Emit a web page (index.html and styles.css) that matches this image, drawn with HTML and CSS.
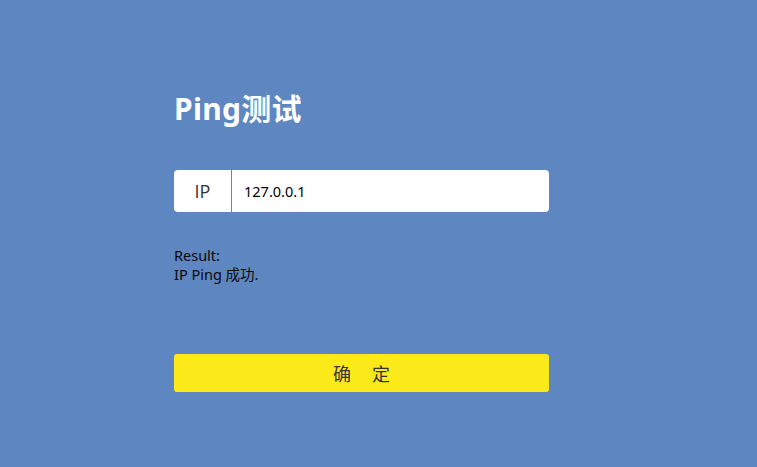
FILE: index.html
```html
<!DOCTYPE html>
<html lang="zh-CN">
<head>
<meta charset="utf-8">
<title>Ping测试</title>
<link rel="stylesheet" href="styles.css">
</head>
<body>
<main class="panel">
  <h1 class="title">Ping测试</h1>
  <div class="field">
    <span class="field-label">IP</span>
    <input class="field-input" type="text" value="127.0.0.1">
  </div>
  <div class="result">
    <div>Result:</div>
    <div>IP Ping 成功.</div>
  </div>
  <button class="confirm" type="button"><span>确</span><span>定</span></button>
</main>
</body>
</html>
```

FILE: styles.css
```css
html, body {
  margin: 0;
  padding: 0;
  height: 100%;
}
body {
  background: #5e86c1;
  font-family: "Noto Sans", "Noto Sans CJK SC", sans-serif;
}
.panel {
  width: 375px;
  padding: 86px 0 0 174px;
  display: flex;
  flex-direction: column;
}
.title {
  margin: 0;
  font-size: 30px;
  line-height: 45px;
  font-weight: bold;
  color: #ffffff;
  letter-spacing: 0.3px;
}
.field {
  margin-top: 39px;
  height: 42px;
  display: flex;
  background: #ffffff;
  border-radius: 4px;
  overflow: hidden;
}
.field-label {
  width: 57px;
  flex: none;
  display: flex;
  align-items: center;
  justify-content: center;
  font-family: "Open Sans", "Noto Sans", sans-serif;
  font-size: 18px;
  color: #333333;
  border-right: 1px solid #5e86c1;
}
.field-input {
  flex: 1;
  border: 0;
  outline: none;
  padding: 0 0 0 12px;
  margin: 0;
  font-family: "Noto Sans", "Noto Sans CJK SC", sans-serif;
  font-size: 14.5px;
  color: #000000;
  background: transparent;
}
.result {
  margin-top: 34px;
  font-size: 14.5px;
  line-height: 19px;
  color: #0a0a0a;
}
.confirm {
  margin-top: 70px;
  height: 38px;
  border: 0;
  border-radius: 3px;
  background: #fbe91a;
  color: #333333;
  font-family: "Noto Sans CJK SC", sans-serif;
  font-size: 18px;
  padding: 0;
  display: flex;
  align-items: center;
  justify-content: center;
  gap: 21px;
  cursor: pointer;
}
```
